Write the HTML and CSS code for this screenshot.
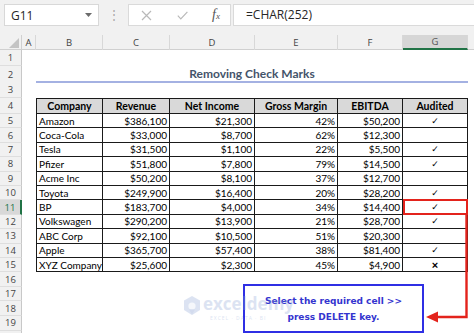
FILE: index.html
```html
<!DOCTYPE html>
<html lang="en">
<head>
  <meta charset="UTF-8">
  <meta name="viewport" content="width=device-width, initial-scale=1.0">
  <title>Removing Check Marks</title>
  <link rel="stylesheet" href="styles.css">
</head>
<body>

  <!-- Formula bar -->
  <div class="formula-bar">
    <div class="name-box">
      <span>G11</span>
      <svg class="caret" width="7" height="4" viewBox="0 0 7 4"><path d="M0 0H7L3.5 4Z" fill="#6b6b6b"/></svg>
    </div>
    <div class="grip">⋮</div>
    <div class="fx-buttons">
      <svg width="11" height="11" viewBox="0 0 11 11"><path d="M1 1L10 10M10 1L1 10" stroke="#b9b9b9" stroke-width="1.2" fill="none"/></svg>
      <svg width="11" height="9" viewBox="0 0 11 9"><path d="M0.8 4.6L3.8 7.8L10.4 0.8" stroke="#b9b9b9" stroke-width="1.2" fill="none"/></svg>
      <span class="fx"><i>f</i><i class="x">x</i></span>
    </div>
    <div class="formula">=CHAR(252)</div>
  </div>

  <!-- Sheet -->
  <div class="sheet">
    <div class="row col-heads">
      <div class="corner"><span class="tri"></span></div>
      <div class="ch">A</div>
      <div class="ch">B</div>
      <div class="ch">C</div>
      <div class="ch">D</div>
      <div class="ch">E</div>
      <div class="ch">F</div>
      <div class="ch sel">G</div>
      <div class="ch last"></div>
    </div>

    <div class="row tall"><div class="rh">1</div></div>
    <div class="row tall"><div class="rh">2</div><div class="title">Removing Check Marks</div></div>
    <div class="row tall"><div class="rh">3</div></div>

    <div class="row tall head">
      <div class="rh">4</div>
      <div class="c first">Company</div>
      <div class="c">Revenue</div>
      <div class="c">Net Income</div>
      <div class="c">Gross Margin</div>
      <div class="c">EBITDA</div>
      <div class="c">Audited</div>
    </div>

    <div class="row"><div class="rh">5</div><div class="c first">Amazon</div><div class="c n">$386,100</div><div class="c n">$21,300</div><div class="c n">42%</div><div class="c n">$50,200</div><div class="c ck">✓</div></div>
    <div class="row"><div class="rh">6</div><div class="c first">Coca-Cola</div><div class="c n">$33,000</div><div class="c n">$8,700</div><div class="c n">62%</div><div class="c n">$12,300</div><div class="c ck"></div></div>
    <div class="row"><div class="rh">7</div><div class="c first">Tesla</div><div class="c n">$31,500</div><div class="c n">$1,100</div><div class="c n">22%</div><div class="c n">$5,500</div><div class="c ck">✓</div></div>
    <div class="row"><div class="rh">8</div><div class="c first">Pfizer</div><div class="c n">$51,800</div><div class="c n">$7,800</div><div class="c n">79%</div><div class="c n">$14,500</div><div class="c ck">✓</div></div>
    <div class="row"><div class="rh">9</div><div class="c first">Acme Inc</div><div class="c n">$50,200</div><div class="c n">$8,100</div><div class="c n">37%</div><div class="c n">$12,700</div><div class="c ck"></div></div>
    <div class="row"><div class="rh">10</div><div class="c first">Toyota</div><div class="c n">$249,900</div><div class="c n">$16,400</div><div class="c n">20%</div><div class="c n">$28,200</div><div class="c ck">✓</div></div>
    <div class="row"><div class="rh sel">11</div><div class="c first">BP</div><div class="c n">$183,700</div><div class="c n">$4,000</div><div class="c n">34%</div><div class="c n">$14,400</div><div class="c ck">✓</div></div>
    <div class="row"><div class="rh">12</div><div class="c first">Volkswagen</div><div class="c n">$290,200</div><div class="c n">$13,900</div><div class="c n">21%</div><div class="c n">$28,700</div><div class="c ck">✓</div></div>
    <div class="row"><div class="rh">13</div><div class="c first">ABC Corp</div><div class="c n">$92,100</div><div class="c n">$10,500</div><div class="c n">51%</div><div class="c n">$20,300</div><div class="c ck"></div></div>
    <div class="row"><div class="rh">14</div><div class="c first">Apple</div><div class="c n">$365,700</div><div class="c n">$57,400</div><div class="c n">38%</div><div class="c n">$81,400</div><div class="c ck">✓</div></div>
    <div class="row"><div class="rh">15</div><div class="c first">XYZ Company</div><div class="c n">$25,600</div><div class="c n">$2,300</div><div class="c n">45%</div><div class="c n">$4,900</div><div class="c ck cross">×</div></div>

    <div class="row low"><div class="rh">16</div></div>
    <div class="row low"><div class="rh">17</div></div>
    <div class="row low"><div class="rh">18</div></div>
    <div class="row low"><div class="rh">19</div></div>
    <div class="row low"><div class="rh">20</div></div>
  </div>

  <!-- Annotation over the sheet -->
  <div class="red-box"></div>
  <svg class="arrow" width="54" height="114" viewBox="420 212 54 114">
    <path d="M466.5 213V317H436" stroke="#e3231c" stroke-width="2.4" fill="none"/>
    <path d="M426 317L438 311.5V322.5Z" fill="#e3231c"/>
  </svg>
  <div class="callout">
    <div>Select the required cell &gt;&gt;</div>
    <div>press DELETE key.</div>
  </div>

  <!-- Watermark -->
  <svg class="watermark" width="135" height="30" viewBox="0 0 135 30">
    <path d="M12 1L20 5.5V15L12 20L4 15V5.5Z" fill="#8ea6d6"/>
    <circle cx="12" cy="11" r="3.6" fill="#dfe7f5"/>
    <path d="M9 14.5L12 19.5L15 14.5Z" fill="#6f8cc8"/>
    <text x="23" y="15" class="wm-name">exceldemy</text>
    <text x="30" y="24.5" class="wm-sub">EXCEL · DATA · BI</text>
  </svg>

</body>
</html>
```

FILE: styles.css
```css
* {
  box-sizing: border-box;
}

html, body {
  margin: 0;
  padding: 0;
}

body {
  position: relative;
  width: 474px;
  height: 333px;
  overflow: hidden;
  background: #fff;
  font-family: Lato, "Open Sans", sans-serif;
  color: #000;
}

/* Formula bar */
.formula-bar {
  display: flex;
  align-items: flex-start;
  height: 35px;
  padding-top: 4px;
  background: #f1f1f1;
  font-family: "Open Sans", sans-serif;
  font-size: 12px;
  color: #262626;
}

.name-box {
  display: flex;
  align-items: center;
  justify-content: space-between;
  width: 95px;
  height: 22px;
  margin-left: 4px;
  padding: 0 6px 0 6px;
  background: #fff;
  border: 1px solid #d8d8d8;
}

.grip {
  width: 29px;
  height: 22px;
  line-height: 22px;
  text-align: center;
  color: #a8a8a8;
  font-size: 12px;
}

.fx-buttons {
  display: flex;
  align-items: center;
  justify-content: space-between;
  width: 103px;
  height: 22px;
  padding: 0 10px 0 12px;
  background: #fff;
  border: 1px solid #dadada;
}

.fx {
  font-family: "Liberation Serif", serif;
  color: #555;
  font-size: 14px;
}

.fx .x {
  font-size: 9px;
}

.formula {
  flex: 1;
  height: 22px;
  margin-left: 2px;
  padding-left: 12px;
  line-height: 20px;
  background: #fff;
  border: 1px solid #dadada;
  border-right: none;
}

/* Sheet grid */
.row {
  display: grid;
  grid-template-columns: 22px 14px 67px 67px 85px 83px 65px 65px 1fr;
  height: 14.4px;
  font-size: 10px;
}

.row.tall { height: 16px; }
.row.low { height: 14.6px; }

.col-heads {
  height: 15px;
  background: #f1f1f1;
  border-bottom: 1px solid #d0d0d0;
  font-family: "Open Sans", sans-serif;
  font-size: 9.5px;
  color: #444;
}

.corner {
  position: relative;
  border-right: 1px solid #d0d0d0;
}

.tri {
  position: absolute;
  right: 2px;
  bottom: 2px;
  width: 0;
  height: 0;
  border-left: 10px solid transparent;
  border-bottom: 10px solid #c4c4c4;
}

.ch {
  display: flex;
  align-items: center;
  justify-content: center;
  border-right: 1px solid #d8d8d8;
}

.ch.sel {
  background: #d6d6d6;
  border-bottom: 2px solid #217346;
  color: #555;
}

.ch.last {
  border-right: none;
}

.rh {
  display: flex;
  align-items: center;
  justify-content: center;
  background: #f1f1f1;
  border-right: 1px solid #c8c8c8;
  border-bottom: 1px solid #dedede;
  font-family: "Open Sans", sans-serif;
  font-size: 9.5px;
  color: #444;
}

.rh.sel {
  background: #d8d8d8;
  color: #217346;
  border-right: 2px solid #217346;
}

.title {
  grid-column: 3 / 9;
  display: flex;
  align-items: center;
  justify-content: center;
  border-bottom: 2px solid #a4b1e2;
  font-weight: bold;
  font-size: 12px;
  color: #44546a;
}

/* Table cells */
.c {
  display: flex;
  align-items: center;
  padding: 0 2px;
  border-right: 1px solid #1a1a1a;
  border-bottom: 1px solid #1a1a1a;
  white-space: nowrap;
}

.c.first {
  grid-column: 3;
  border-left: 1px solid #1a1a1a;
}

.c.n {
  justify-content: flex-end;
}

.c.ck {
  justify-content: center;
  font-family: "DejaVu Sans", sans-serif;
  font-size: 9px;
}

.c.cross {
  font-family: "Liberation Sans", sans-serif;
  font-weight: bold;
  font-size: 11px;
}

.head .c {
  justify-content: center;
  background: #d9d9d9;
  border-top: 1px solid #1a1a1a;
  font-weight: bold;
  font-size: 10.5px;
}

/* Annotation */
.red-box {
  position: absolute;
  left: 403px;
  top: 199px;
  width: 65px;
  height: 16px;
  border: 2px solid #e3231c;
}

.arrow {
  position: absolute;
  left: 420px;
  top: 212px;
}

.callout {
  position: absolute;
  left: 243px;
  top: 284px;
  width: 181px;
  height: 49px;
  padding-top: 7px;
  background: #fff;
  border: 2px solid #2f2fe4;
  text-align: center;
  font-family: "DejaVu Sans", sans-serif;
  font-weight: bold;
  font-size: 9px;
  line-height: 16px;
  color: #3434cf;
}

/* Watermark */
.watermark {
  position: absolute;
  left: 180px;
  top: 295px;
  opacity: 0.3;
}

.wm-name {
  font-family: "Open Sans", sans-serif;
  font-weight: bold;
  font-size: 17px;
  fill: #8ea6d6;
}

.wm-sub {
  font-family: "Open Sans", sans-serif;
  font-size: 5px;
  letter-spacing: 1px;
  fill: #8ea6d6;
}
```
